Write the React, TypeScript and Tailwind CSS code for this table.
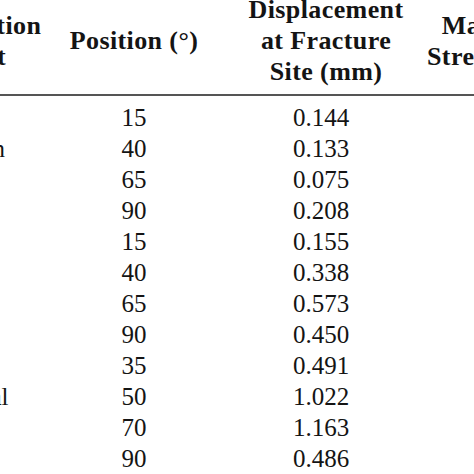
import { Fragment } from 'react'

const groups = [
  { label: ['Extension', 'loading'], rows: [['15', '0.144', '12.4'], ['40', '0.133', '11.8'], ['65', '0.075', '9.62'], ['90', '0.208', '14.1']] },
  { label: ['Flexion', 'loading'], rows: [['15', '0.155', '13.7'], ['40', '0.338', '18.2'], ['65', '0.573', '22.9'], ['90', '0.450', '20.3']] },
  { label: ['Horizontal', 'loading'], rows: [['35', '0.491', '21.6'], ['50', '1.022', '35.4'], ['70', '1.163', '38.8'], ['90', '0.486', '21.1']] },
]

export default function App() {
  return (
    <div
      className="w-[474px] h-[474px] overflow-hidden bg-white text-[#141414]"
      style={{ fontFamily: '"Liberation Serif", "Times New Roman", serif' }}
    >
      <div className="ml-[-130px] mt-[-6px] w-[704px]">
        <div className="grid grid-cols-[180px_168px_210px_146px] items-center border-b-2 border-[#555] pb-[7px] text-center text-[26px] font-bold leading-[31px] tracking-[0.4px]">
          <div className="flex flex-col items-center whitespace-nowrap">
            <span>Configuration</span>
            <span>Implant</span>
          </div>
          <div>Position (°)</div>
          <div className="pl-[6px]">Displacement<br />at Fracture<br />Site (mm)</div>
          <div className="flex flex-col items-center whitespace-nowrap">
            <span>Maximum</span>
            <span>Stress (MPa)</span>
          </div>
        </div>
        <div className="grid grid-cols-[180px_168px_210px_146px] auto-rows-[31px] pt-[5.5px] text-center text-[25px] leading-[31px]">
          {groups.map(g => (
            <Fragment key={g.label[0]}>
              <div className="row-span-4 flex items-center justify-center pr-[10px]">
                <div className="whitespace-nowrap">{g.label[0]}<br />{g.label[1]}</div>
              </div>
              {g.rows.map((r, i) => (
                <Fragment key={i}>
                  <div>{r[0]}</div>
                  <div className="pr-[4px]">{r[1]}</div>
                  <div>{r[2]}</div>
                </Fragment>
              ))}
            </Fragment>
          ))}
        </div>
      </div>
    </div>
  )
}
